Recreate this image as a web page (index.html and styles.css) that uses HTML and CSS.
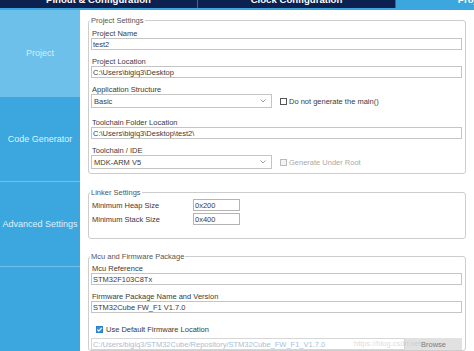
FILE: index.html
```html
<!DOCTYPE html>
<html lang="en">
<head>
    <meta charset="UTF-8">
    <meta name="viewport" content="width=device-width, initial-scale=1.0">
    <title>Project Manager</title>
    <link rel="stylesheet" href="styles.css">
</head>
<body>
    <nav class="tabs">
        <div class="tab"><span>Pinout &amp; Configuration</span></div>
        <div class="tab"><span>Clock Configuration</span></div>
        <div class="tab active"><span>Project Manager</span></div>
    </nav>

    <div class="layout">
        <ul class="side">
            <li class="current">Project</li>
            <li>Code Generator</li>
            <li>Advanced Settings</li>
            <li></li>
        </ul>

        <main class="content">
            <fieldset class="box box-project">
                <legend>Project Settings</legend>
                <div class="field">
                    <label>Project Name</label>
                    <input class="input" type="text" value="test2">
                </div>
                <div class="field">
                    <label>Project Location</label>
                    <input class="input" type="text" value="C:\Users\bigiq3\Desktop">
                </div>
                <div class="field field-select">
                    <label>Application Structure</label>
                    <div class="row">
                        <div class="select">
                            <span>Basic</span>
                            <svg width="6" height="4" viewBox="0 0 6 4"><path d="M0.5 0.5 L3 3 L5.5 0.5" fill="none" stroke="#888" stroke-width="0.8"/></svg>
                        </div>
                        <span class="check"><i class="cb"></i>Do not generate the main()</span>
                    </div>
                </div>
                <div class="field">
                    <label>Toolchain Folder Location</label>
                    <input class="input" type="text" value="C:\Users\bigiq3\Desktop\test2\">
                </div>
                <div class="field last">
                    <label>Toolchain / IDE</label>
                    <div class="row">
                        <div class="select">
                            <span>MDK-ARM V5</span>
                            <svg width="6" height="4" viewBox="0 0 6 4"><path d="M0.5 0.5 L3 3 L5.5 0.5" fill="none" stroke="#888" stroke-width="0.8"/></svg>
                        </div>
                        <span class="check disabled"><i class="cb"></i>Generate Under Root</span>
                    </div>
                </div>
            </fieldset>

            <fieldset class="box box-linker">
                <legend>Linker Settings</legend>
                <div class="pair">
                    <label>Minimum Heap Size</label>
                    <input class="input small" type="text" value="0x200">
                </div>
                <div class="pair">
                    <label>Minimum Stack Size</label>
                    <input class="input small" type="text" value="0x400">
                </div>
            </fieldset>

            <fieldset class="box box-mcu">
                <legend>Mcu and Firmware Package</legend>
                <div class="field">
                    <label>Mcu Reference</label>
                    <input class="input" type="text" value="STM32F103C8Tx">
                </div>
                <div class="field">
                    <label>Firmware Package Name and Version</label>
                    <input class="input" type="text" value="STM32Cube FW_F1 V1.7.0">
                </div>
                <div class="check checked">
                    <i class="cb"><svg width="7" height="7" viewBox="0 0 7 7"><path d="M1.3 3.6 L2.8 5 L5.8 1.8" fill="none" stroke="#fff" stroke-width="1.1"/></svg></i>Use Default Firmware Location
                </div>
                <div class="row path">
                    <input class="input off" type="text" value="C:/Users/bigiq3/STM32Cube/Repository/STM32Cube_FW_F1_V1.7.0" disabled>
                    <button class="browse" disabled>Browse</button>
                </div>
            </fieldset>
        </main>
    </div>

    <div class="mark">https://blog.csdn.net/</div>
</body>
</html>
```

FILE: styles.css
```css
* { box-sizing: border-box; }
body { margin: 0; width: 474px; height: 351px; overflow: hidden; position: relative; background: #fff; color: #3a3a3a; font-family: "Liberation Sans", Arial, sans-serif; font-size: 7.5px; }

/* top tabs */
.tabs { display: flex; height: 10px; background: #0c2150; border-bottom: 2px solid #3ca6de; overflow: hidden; }
.tab { flex: none; width: 198px; height: 8px; overflow: hidden; border-right: 1px solid #4d6189; color: #fff; font-weight: bold; font-size: 9.6px; text-align: center; }
.tab span { display: block; margin-top: -6.5px; line-height: 12px; }
.tab.active { background: #3ca6de; border-right: none; }

/* left menu */
.layout { display: flex; height: 341px; }
.side { list-style: none; margin: 0; padding: 0; width: 80px; flex: none; background: #3ca6de; }
.side li { height: 85px; border-bottom: 1px solid #6ebfe9; display: flex; align-items: center; justify-content: center; color: #dff2fb; font-size: 9px; }
.side li.current { height: 87px; background: #6cc0e9; color: #d3eefa; }

/* panels */
.content { flex: 1; padding: 6px 8px 0 8px; }
.box { margin: 0; padding: 4px 3px 4px 2px; border: 1px solid #cdcdcd; border-radius: 3px; min-width: 0; }
.box legend { padding: 0 1px; margin-left: -1px; line-height: 9px; color: #555; }
.box-linker { margin-top: 14px; padding: 2px 3px 13px 2px; }
.box-mcu { margin-top: 13px; padding: 3px 3px 0 2px; }

.field { margin-bottom: 7px; }
.field.last { margin-bottom: 0; }
.field-select { margin-bottom: 10px; }
.field label { display: block; padding-left: 1px; line-height: 9px; }

.input { display: block; width: 100%; height: 12px; margin: 0; padding: 0 1px; border: 1px solid #c4c4c4; border-radius: 0; font: inherit; color: #3a3a3a; background: #fff; outline: none; }
.input.small { width: 47px; border-color: #b4b4b4; }
.input.off { flex: 1; border-color: #d6d6d6; color: #a9c0d6; background: #fff; }

.row { display: flex; align-items: center; }
.select { width: 181px; height: 14px; display: flex; align-items: center; justify-content: space-between; padding: 0 5px 0 2px; border: 1px solid #c4c4c4; background: #fff; }

.check { display: inline-flex; align-items: center; margin-left: 8px; line-height: 9px; color: #3a3a3a; }
.check .cb { display: inline-block; width: 7px; height: 7px; margin-right: 2px; border: 1px solid #555; background: #fff; }
.check.disabled { color: #aaa; }
.check.disabled .cb { border-color: #bbb; background: #f4f4f4; }
.check.checked { display: flex; margin: 12px 0 4px 5px; }
.check.checked .cb { position: relative; border-color: #2f7fd0; background: #3a8edb; margin-right: 3px; }
.check.checked .cb svg { position: absolute; left: -1px; top: -1px; }

.pair { display: flex; align-items: center; height: 12px; margin-bottom: 2px; }
.pair:last-child { margin-bottom: 0; }
.pair label { width: 102px; padding-left: 1px; }

.path { height: 12px; }
.browse { width: 57px; height: 12px; margin: 0; padding: 0; border: none; background: #e1e1e1; color: #7a7a7a; font: inherit; }

.mark { position: absolute; left: 354px; top: 339px; color: rgba(190, 190, 190, 0.55); font-size: 7.5px; }
```
